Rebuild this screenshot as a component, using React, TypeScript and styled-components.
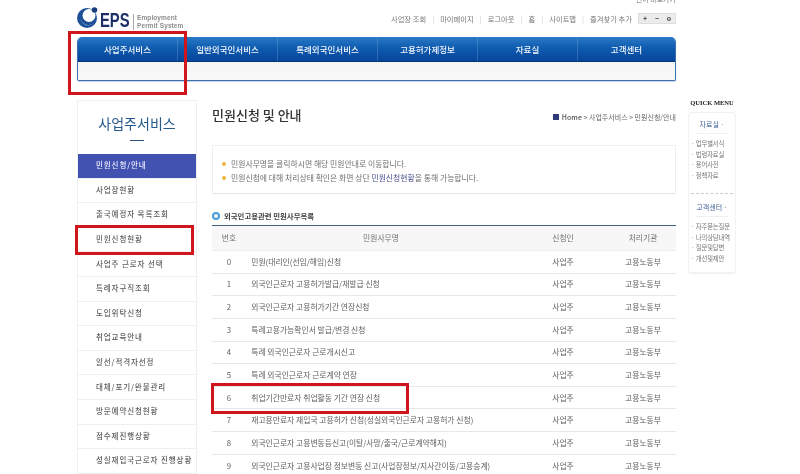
import styled, { createGlobalStyle } from "styled-components"

const GlobalStyle = createGlobalStyle`
  html, body {
    margin: 0;
    padding: 0;
    background: #fff;
  }
  body {
    font-family: "Noto Sans CJK KR", "Liberation Sans", sans-serif;
    color: #555;
  }
`

const Page = styled.div`
  position: relative;
  width: 800px;
  height: 474px;
  overflow: hidden;
  background: #fff;
  filter: blur(0.3px);
`

const Shell = styled.div`
  width: 660px;
  margin-left: 77px;
  display: flex;
  flex-direction: column;
`

const Main = styled.div`
  width: 599px;
`

const CutLine = styled.div`
  height: 3px;
  width: 599px;
  display: flex;
  justify-content: flex-end;
  align-items: flex-end;
  overflow: hidden;
  font-size: 7px;
  line-height: 8px;
  color: #777;
`

const Header = styled.div`
  width: 599px;
  height: 34px;
  display: flex;
  justify-content: space-between;
`

const Logo = styled.div`
  display: flex;
  align-items: center;
  height: 24px;
  margin-top: 2px;
`

const LogoWord = styled.span`
  font-family: "Liberation Sans", sans-serif;
  font-size: 20px;
  font-weight: 700;
  color: #1c2f66;
  margin: 6px 0 0 1px;
  transform: scaleX(0.74);
  transform-origin: left center;
  width: 33px;
`

const LogoSub = styled.span`
  font-family: "Liberation Sans", sans-serif;
  font-size: 6.5px;
  line-height: 8px;
  font-weight: 700;
  letter-spacing: 0.1px;
  color: #8d8d8d;
  border-left: 1px solid #aaa;
  padding-left: 3px;
  margin-top: 9px;
  white-space: nowrap;
`

const TopLinks = styled.div`
  display: flex;
  align-items: center;
  height: 31px;
  font-size: 7.3px;
  color: #777;
`

const TopLink = styled.span`
  & + &::before {
    content: "|";
    color: #ccc;
    margin: 0 6px;
  }
`

const ZoomGroup = styled.div`
  display: flex;
  margin-left: 6px;
  background: #ececec;
  border: 1px solid #ddd;
`

const ZoomBtn = styled.span`
  width: 12px;
  height: 9px;
  font-size: 7px;
  line-height: 9px;
  text-align: center;
  color: #444;
  font-weight: 700;
`

const Nav = styled.div`
  height: 44px;
  border-radius: 5px 5px 2px 2px;
  border: 1px solid #3a70ad;
  border-top: 0;
  box-sizing: border-box;
  overflow: hidden;
  background: linear-gradient(#f0f0f0, #f8f8f8);
  box-shadow: 0 1px 1px #c5d2e2;
`

const NavBar = styled.div`
  height: 25px;
  display: grid;
  grid-template-columns: 100px 100px 100px 100px 100px 1fr;
  background: linear-gradient(#2a79c7 0%, #0f5cb0 45%, #06459a 100%);
  border-bottom: 1px solid #06357c;
  box-sizing: border-box;
`

const NavItem = styled.div`
  display: flex;
  align-items: center;
  justify-content: center;
  color: #f2f6fb;
  font-size: 8.5px;
  font-weight: 500;
  padding-bottom: 1px;
  border-right: 1px solid rgba(120, 165, 215, 0.35);

  &:last-child {
    border-right: 0;
  }
`

const Body = styled.div`
  display: flex;
  margin-top: 19px;
`

const Side = styled.div`
  width: 120px;
  border: 1px solid #f0f0f0;
  border-bottom: 0;
  box-sizing: border-box;
  flex-shrink: 0;
`

const SideTitle = styled.div`
  height: 53px;
  display: flex;
  flex-direction: column;
  align-items: center;
  color: #275a8c;
  font-size: 14px;
  line-height: 20px;
  padding-top: 12px;
  box-sizing: border-box;

  &::after {
    content: "";
    width: 14px;
    height: 1px;
    background: #2a5078;
    margin-top: 7px;
  }
`

const SideItem = styled.div<{ $active?: boolean }>`
  height: 24.6px;
  box-sizing: border-box;
  padding: 0 0 2px 18px;
  display: flex;
  align-items: center;
  font-size: 7.5px;
  letter-spacing: 0.9px;
  font-weight: 500;
  white-space: nowrap;
  color: ${props => (props.$active ? "#eef" : "#5c5c5c")};
  background: ${props => (props.$active ? "#4252b0" : "#fff")};
  border-bottom: 1px solid #efefef;
`

const Content = styled.div`
  width: 464px;
  margin-left: 15px;
`

const TitleRow = styled.div`
  height: 45px;
  display: flex;
  justify-content: space-between;
`

const PageTitle = styled.div`
  font-size: 13px;
  font-weight: 500;
  line-height: 30px;
  color: #333;
`

const Crumb = styled.div`
  display: flex;
  align-items: center;
  height: 33px;
  font-size: 7px;
  color: #666;
  white-space: pre;
`

const CrumbIcon = styled.span`
  width: 6px;
  height: 6px;
  margin-right: 3px;
  background: #2f3a78;
`

const CrumbHome = styled.span`
  font-weight: 500;
  color: #555;
`

const Notice = styled.div`
  height: 49px;
  box-sizing: border-box;
  border: 1px solid #f0f0f0;
  border-bottom: 1px solid #e6e6e6;
  padding: 11px 0 0 9px;
`

const NoticeLine = styled.div`
  font-size: 7.85px;
  line-height: 14px;
  color: #707070;
  display: flex;
  align-items: center;
  white-space: pre;

  &::before {
    content: "";
    width: 4px;
    height: 4px;
    border-radius: 50%;
    background: #f0b63c;
    margin-right: 5px;
  }
`

const NoticeLink = styled.span`
  color: #4a5290;
`

const SectionTitle = styled.div`
  display: flex;
  align-items: center;
  height: 31px;
  padding-top: 12px;
  box-sizing: border-box;
  font-size: 7.4px;
  font-weight: 700;
  color: #444;
`

const Ring = styled.span`
  width: 4px;
  height: 4px;
  border: 2.5px solid #4a9fd0;
  border-radius: 50%;
  margin-right: 4px;
`

const Table = styled.table`
  width: 464px;
  border-collapse: collapse;
  table-layout: fixed;
  border-top: 1px solid #46617f;
`

const HeadCell = styled.th`
  box-sizing: border-box;
  height: 25px;
  padding: 0 0 2px;
  background: #f7f7f7;
  font-size: 7.8px;
  font-weight: 400;
  color: #707070;
  text-align: center;
  border-bottom: 1px solid #eee;
`

const Cell = styled.td<{ $left?: boolean }>`
  box-sizing: border-box;
  height: 22.65px;
  padding: 0 0 1px;
  font-size: 7.8px;
  color: #606060;
  white-space: nowrap;
  text-align: ${props => (props.$left ? "left" : "center")};
  border-bottom: 1px solid #e8e8e8;
`

const Quick = styled.div`
  width: 48px;
  margin-left: 12px;
  flex-shrink: 0;
`

const QuickTitle = styled.div`
  font-family: "Liberation Serif", serif;
  font-size: 6.5px;
  font-weight: 700;
  line-height: 11px;
  color: #222;
  text-align: center;
  white-space: nowrap;
  margin-top: -3px;
`

const QuickCard = styled.div`
  width: 48px;
  height: 161px;
  margin-top: 4px;
  border: 1px solid #f2f2f2;
  border-radius: 3px;
  box-sizing: border-box;
  box-shadow: 0 1px 1px #f0f0f0;
  padding: 5px 2px 0 2px;
`

const QuickHead = styled.div`
  height: 15px;
  margin: 0 5px;
  font-size: 7px;
  line-height: 12px;
  text-align: center;
  color: #3c5f96;
  border-bottom: 1px solid #f0f0f0;
  white-space: nowrap;
`

const QuickList = styled.div<{ $dashed?: boolean }>`
  padding-top: 5px;
  height: ${props => (props.$dashed ? "60px" : "auto")};
  box-sizing: border-box;
  border-bottom: ${props => (props.$dashed ? "1px dashed #ccc" : "0")};
  margin-bottom: ${props => (props.$dashed ? "7px" : "0")};
`

const QuickItem = styled.div`
  font-size: 6.3px;
  line-height: 10.6px;
  color: #777;
  white-space: nowrap;
  letter-spacing: -0.1px;
`

const Mark = styled.div<{ $x: number; $y: number; $w: number; $h: number }>`
  position: absolute;
  left: ${props => props.$x}px;
  top: ${props => props.$y}px;
  width: ${props => props.$w}px;
  height: ${props => props.$h}px;
  box-sizing: border-box;
  border: 3px solid #d0161c;
`

const sideItems = [
  "민원신청/안내",
  "사업장현황",
  "출국예정자 목록조회",
  "민원신청현황",
  "사업주 근로자 선택",
  "특례자구직조회",
  "도입위탁신청",
  "취업교육안내",
  "알선/적격자선정",
  "대체/포기/완불관리",
  "방문예약신청현황",
  "점수제진행상황",
  "성실재입국근로자 진행상황",
]

const rows = [
  "민원(대리인(선임/해임)신청",
  "외국인근로자 고용허가발급/재발급 신청",
  "외국인근로자 고용허가기간 연장신청",
  "특례고용가능확인서 발급/변경 신청",
  "특례 외국인근로자 근로개시신고",
  "특례 외국인근로자 근로계약 연장",
  "취업기간만료자 취업활동 기간 연장 신청",
  "재고용만료자 재입국 고용허가 신청(성실외국인근로자 고용허가 신청)",
  "외국인근로자 고용변동등신고(이탈/사망/출국/근로계약해지)",
  "외국인근로자 고용사업장 정보변동 신고(사업장정보/지사간이동/고용승계)",
]

function App() {
  return (
    <Page>
      <GlobalStyle />
      <Shell>
        <Main>
          <CutLine>언어 바로가기</CutLine>
          <Header>
            <Logo>
              <svg width="22" height="24" viewBox="0 0 22 24">
                <circle cx="10" cy="13" r="10" fill="#1f4f96" />
                <circle cx="12" cy="10.5" r="6.5" fill="#fff" />
                <path d="M3.5 13a8 8 0 0 0 13 5a7.5 7.5 0 0 1-13-5z" fill="#6d9bd2" />
                <circle cx="17.5" cy="5" r="2.8" fill="#1b3e7c" />
              </svg>
              <LogoWord>EPS</LogoWord>
              <LogoSub>
                Employment
                <br />
                Permit System
              </LogoSub>
            </Logo>
            <TopLinks>
              <TopLink>사업장 조회</TopLink>
              <TopLink>마이페이지</TopLink>
              <TopLink>로그아웃</TopLink>
              <TopLink>홈</TopLink>
              <TopLink>사이트맵</TopLink>
              <TopLink>즐겨찾기 추가</TopLink>
              <ZoomGroup>
                <ZoomBtn>+</ZoomBtn>
                <ZoomBtn>−</ZoomBtn>
                <ZoomBtn>o</ZoomBtn>
              </ZoomGroup>
            </TopLinks>
          </Header>
          <Nav>
            <NavBar>
              <NavItem>사업주서비스</NavItem>
              <NavItem>일반외국인서비스</NavItem>
              <NavItem>특례외국인서비스</NavItem>
              <NavItem>고용허가제정보</NavItem>
              <NavItem>자료실</NavItem>
              <NavItem>고객센터</NavItem>
            </NavBar>
          </Nav>
        </Main>
        <Body>
          <Side>
            <SideTitle>사업주서비스</SideTitle>
            {sideItems.map((item, i) => (
              <SideItem key={item} $active={i === 0}>
                {item}
              </SideItem>
            ))}
          </Side>
          <Content>
            <TitleRow>
              <PageTitle>민원신청 및 안내</PageTitle>
              <Crumb>
                <CrumbIcon />
                <CrumbHome>Home</CrumbHome> &gt; 사업주서비스 &gt; 민원신청/안내
              </Crumb>
            </TitleRow>
            <Notice>
              <NoticeLine>민원사무명을 클릭하시면 해당 민원안내로 이동합니다.</NoticeLine>
              <NoticeLine>
                민원신청에 대해 처리상태 확인은 화면 상단 <NoticeLink>민원신청현황</NoticeLink>을 통해 가능합니다.
              </NoticeLine>
            </Notice>
            <SectionTitle>
              <Ring />
              외국인고용관련 민원사무목록
            </SectionTitle>
            <Table>
              <colgroup>
                <col width="34" />
                <col width="270" />
                <col width="94" />
                <col width="66" />
              </colgroup>
              <thead>
                <tr>
                  <HeadCell>번호</HeadCell>
                  <HeadCell>민원사무명</HeadCell>
                  <HeadCell>신청인</HeadCell>
                  <HeadCell>처리기관</HeadCell>
                </tr>
              </thead>
              <tbody>
                {rows.map((name, i) => (
                  <tr key={name}>
                    <Cell>{i}</Cell>
                    <Cell $left>&nbsp;&nbsp;&nbsp;{name}</Cell>
                    <Cell>사업주</Cell>
                    <Cell>고용노동부</Cell>
                  </tr>
                ))}
              </tbody>
            </Table>
          </Content>
          <Quick>
            <QuickTitle>QUICK MENU</QuickTitle>
            <QuickCard>
              <QuickHead>자료실 ·</QuickHead>
              <QuickList $dashed>
                <QuickItem>· 업무별서식</QuickItem>
                <QuickItem>· 법령자료실</QuickItem>
                <QuickItem>· 용어사전</QuickItem>
                <QuickItem>· 정책자료</QuickItem>
              </QuickList>
              <QuickHead>고객센터 ·</QuickHead>
              <QuickList>
                <QuickItem>· 자주묻는질문</QuickItem>
                <QuickItem>· 나의상담내역</QuickItem>
                <QuickItem>· 질문및답변</QuickItem>
                <QuickItem>· 개선및제안</QuickItem>
              </QuickList>
            </QuickCard>
          </Quick>
        </Body>
      </Shell>
      <Mark $x={68} $y={31} $w={119} $h={64} />
      <Mark $x={75} $y={225} $w={119} $h={30} />
      <Mark $x={211} $y={383} $w={198} $h={31} />
    </Page>
  )
}

export default App
